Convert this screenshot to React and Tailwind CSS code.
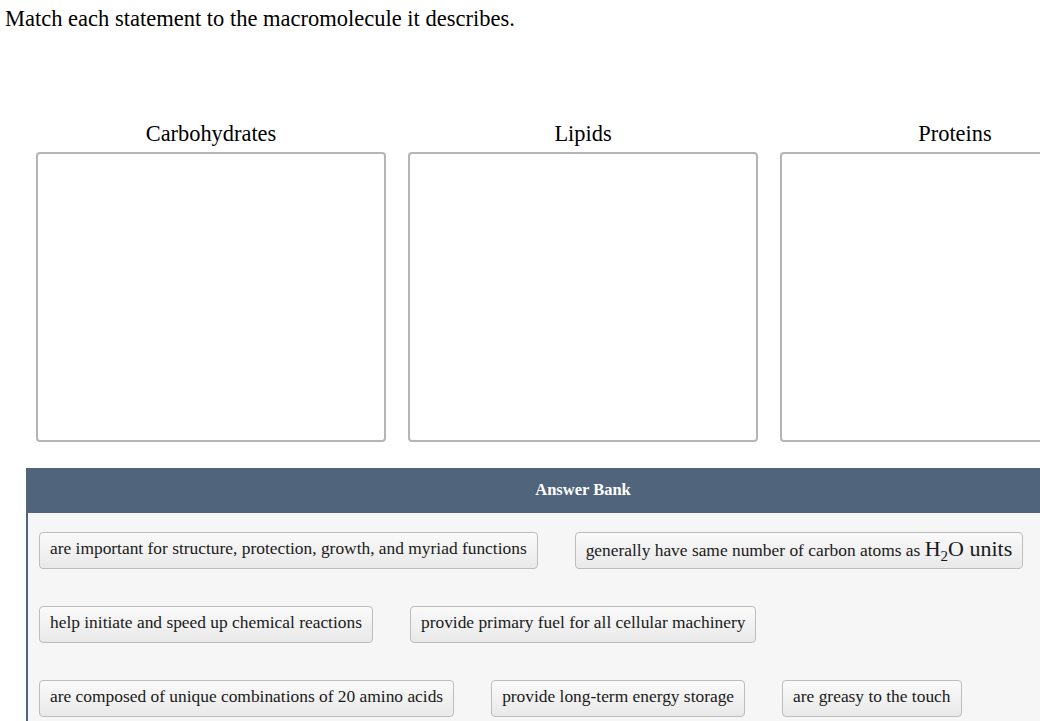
import React from 'react';

const columns = ['Carbohydrates', 'Lipids', 'Proteins'];

const rows = [
  [
    'are important for structure, protection, growth, and myriad functions',
    'h2o',
  ],
  ['help initiate and speed up chemical reactions', 'provide primary fuel for all cellular machinery'],
  [
    'are composed of unique combinations of 20 amino acids',
    'provide long-term energy storage',
    'are greasy to the touch',
  ],
];

function Chip({ children }) {
  return (
    <div className="h-[37px] flex items-center px-[10px] pb-[4px] border border-[#bdbdbd] rounded-[4px] bg-gradient-to-b from-[#fafafa] to-[#e9e9e9] text-[17.4px] text-[#1a1a1a] whitespace-nowrap shrink-0">
      {children}
    </div>
  );
}

export default function App() {
  return (
    <div className="w-[1040px] h-[721px] overflow-hidden bg-white font-['Liberation_Serif',serif] text-black">
      <p className="pl-[5px] pt-[6px] text-[22.5px] leading-[26px]">
        Match each statement to the macromolecule it describes.
      </p>

      <div className="flex gap-[22px] pl-[36px] mt-[89px] w-[1200px]">
        {columns.map((c) => (
          <div key={c} className="w-[350px] shrink-0 flex flex-col items-center">
            <div className="text-[22.4px] leading-[26px] mb-[5px]">{c}</div>
            <div className="w-full h-[290px] border-2 border-[#b5b5b5] rounded-[4px] bg-white" />
          </div>
        ))}
      </div>

      <div className="ml-[26px] mt-[26px] w-[1114px]">
        <div className="h-[45px] bg-[#50647c] flex items-center justify-center text-white font-bold text-[16.5px]">
          Answer Bank
        </div>
        <div className="bg-[#f6f6f6] border-l-2 border-[#50647c] pl-[11px] pt-[19px] pb-6 flex flex-col gap-[37px]">
          {rows.map((row, i) => (
            <div key={i} className="flex gap-[37px]">
              {row.map((t) => (
                <Chip key={t}>
                  {t === 'h2o' ? (
                    <span>
                      generally have same number of carbon atoms as{' '}
                      <span className="text-[22px]">
                        H<span className="text-[15px] relative top-[5px]">2</span>O units
                      </span>
                    </span>
                  ) : (
                    t
                  )}
                </Chip>
              ))}
            </div>
          ))}
        </div>
      </div>
    </div>
  );
}
